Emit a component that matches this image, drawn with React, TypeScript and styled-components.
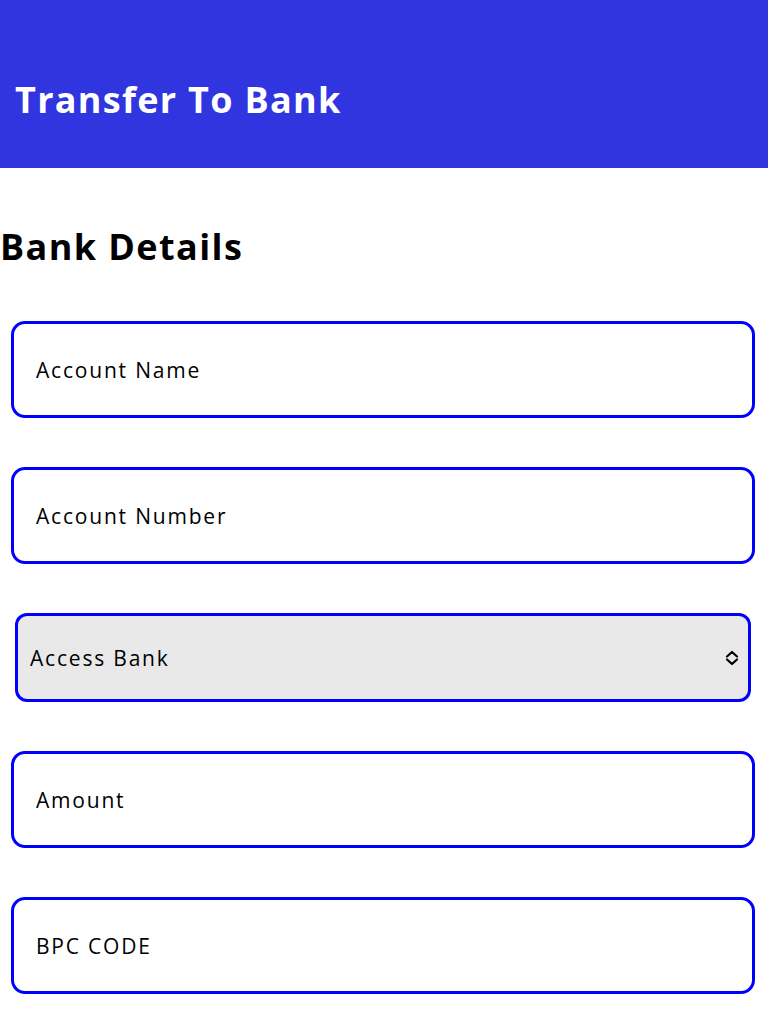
import styled, { createGlobalStyle } from "styled-components";

const GlobalStyle = createGlobalStyle`
  body {
    margin: 0;
    background: #ffffff;
    font-family: "Open Sans", "Noto Sans", sans-serif;
  }
`;

const banks = ["Access Bank", "First Bank", "GTBank", "Zenith Bank", "UBA"];

function App(): React.ReactElement {
  return (
    <>
      <GlobalStyle />
      <Header>
        <Title>Transfer To Bank</Title>
      </Header>
      <Main>
        <SectionTitle>Bank Details</SectionTitle>
        <Form>
          <TextField placeholder="Account Name" />
          <TextField placeholder="Account Number" />
          <SelectWrap>
            <BankSelect defaultValue="Access Bank">
              {banks.map((bank) => (
                <option key={bank}>{bank}</option>
              ))}
            </BankSelect>
            <SelectArrow width="16" height="16" viewBox="0 0 16 16">
              <path
                d="M3 6.5 L8 2 L13 6.5 M3 9.5 L8 14 L13 9.5"
                fill="none"
                stroke="#000"
                strokeWidth="2.2"
                strokeLinecap="round"
                strokeLinejoin="round"
              />
            </SelectArrow>
          </SelectWrap>
          <TextField placeholder="Amount" />
          <TextField placeholder="BPC CODE" />
        </Form>
      </Main>
    </>
  );
}

const Header = styled.header`
  display: flex;
  align-items: center;
  height: 168px;
  padding: 0 15px;
  box-sizing: border-box;
  background: #3035e0;
`;

const Title = styled.h1`
  margin: 0;
  padding-top: 30px;
  color: #ffffff;
  font-size: 36px;
  font-weight: 700;
  letter-spacing: 1.3px;
`;

const Main = styled.main`
  display: flex;
  flex-direction: column;
`;

const SectionTitle = styled.h2`
  margin: 57px 0 0;
  color: #000000;
  font-size: 36px;
  font-weight: 700;
  line-height: 44px;
  letter-spacing: 1.4px;
`;

const Form = styled.div`
  display: flex;
  flex-direction: column;
  gap: 49px;
  padding: 52px 0 30px;
`;

const TextField = styled.input`
  box-sizing: border-box;
  margin: 0 13px 0 11px;
  height: 97px;
  padding: 0 22px;
  border: 3px solid #0000ff;
  border-radius: 14px;
  background: #ffffff;
  font-family: "Open Sans", "Noto Sans", sans-serif;
  font-size: 21px;
  letter-spacing: 1.8px;
  color: #000000;
  outline: none;

  &::placeholder {
    color: #000000;
    opacity: 1;
  }
`;

const SelectWrap = styled.div`
  position: relative;
  margin: 0 17px 0 15px;
`;

const BankSelect = styled.select`
  appearance: none;
  box-sizing: border-box;
  width: 100%;
  height: 89px;
  padding: 0 40px 0 12px;
  border: 3px solid #0000ff;
  border-radius: 12px;
  background: #e9e9e9;
  font-family: "Open Sans", "Noto Sans", sans-serif;
  font-size: 21px;
  letter-spacing: 1.8px;
  color: #000000;
  outline: none;
`;

const SelectArrow = styled.svg`
  position: absolute;
  right: 11px;
  top: 50%;
  transform: translateY(-50%);
  pointer-events: none;
`;

export default App;
